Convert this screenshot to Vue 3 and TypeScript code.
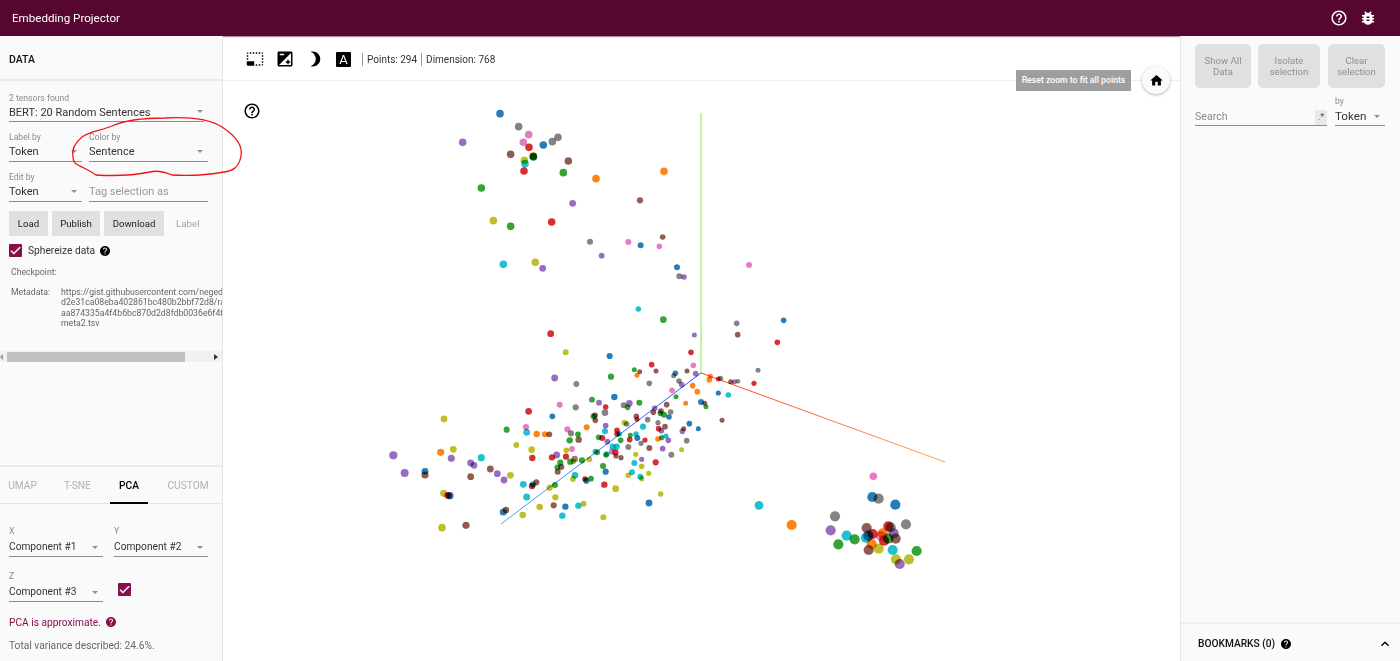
<script setup lang="ts">
// palette index: 0 blue, 1 orange, 2 green, 3 red, 4 purple, 5 brown, 6 pink, 7 gray, 8 olive, 9 cyan
const palette = ["#1f77b4", "#ff7f0e", "#2ca02c", "#d62728", "#9467bd", "#8c564b", "#e377c2", "#7f7f7f", "#bcbd22", "#17becf"];

type Raw = [number, number, number, number?];

// coordinates were read off 3x crops, so each group keeps the crop origin
const groups: { ox: number; oy: number; r: number; pts: Raw[] }[] = [
  {
    ox: 440, oy: 100, r: 3.4,
    pts: [
      [180,41,0],[236,80,7],[266,104,6],[68,127,4],[250,127,6],[267,142,3],[310,135,0],[337,125,7],[354,112,7],[212,163,5],
      [280,168,1],[280,171,9],[280,170,2],[253,181,8],[255,191,9],[252,213,3],[385,183,5],[370,218,2],[468,236,1],[672,214,1],
      [124,264,2],[398,310,4,3],[600,301,5,2.7],[160,362,8],[212,379,2],[335,366,3],[450,425,7,2.6],[565,426,6,2.6],[602,436,0,2.6],
      [668,411,5,2.4],[658,439,6,2.4],[485,467,4,2.5],[190,493,9],[286,487,8],[308,505,4,3],[711,502,0,2.6],[718,529,7,2.6],[732,531,4,2.4],[927,495,6,2.6],
    ],
  },
  {
    ox: 380, oy: 300, r: 3,
    pts: [
      [512,101,3],[557,157,8,2.6],[524,234,4],[589,252,7,2.5],[636,299,2,2.5],[657,308,4,2.5],[539,314,6,2.6],[587,322,7,2.7],[517,349,0,2.5],[446,334,3],
      [645,346,5,2.5],[641,349,2,2.7],[646,361,5,2.4],[192,357,8],[380,389,2,2.7],[438,381,6,2.7],[440,397,9],[470,402,1,2.8],[495,403,1,2.6],[508,403,5,2.5],
      [562,388,6,2.7],[573,400,7,2.7],[594,403,2,2.5],[620,382,1,2.6],[569,421,2,2.8],[596,419,5,2.8],[656,412,2,2.4],[409,435,8,2.5],[455,449,8,2.9],[559,451,8,2.5],
      [576,447,6,2.5],[40,466,4,3.7],[182,457,1,3.2],[220,448,8],[214,475,4,3.2],[304,473,9,3.2],[457,474,3,2.8],[516,472,3,2.8],[530,465,4,3],[558,470,3,2.7],
      [646,455,9,2.4],[652,457,2,2.4],[272,489,4,3],[282,496,4,3],[584,477,7,2.8],[580,484,8,2.5],[571,485,2,2.8],[606,481,2,2.7],[628,478,8,2.5],[541,488,2,2.7],
      [532,502,2,2.5],[544,501,5,2.6],[533,515,5,2.6],[331,507,5,3],[352,521,4,3],[391,526,8,3],[372,540,4,3],[272,530,5,3],[74,519,4,3.6],[135,514,0,3],
      [135,525,5,3.2],[585,526,9,2.9],[579,537,8,2.5],[615,537,3,2.4],[619,542,0,2.7],[633,536,2,2.5],[430,553,9,3],[456,558,3,2.8],[459,553,9,2.8],[469,547,5,2.7],
      [525,555,2,2.6],[509,563,8,2.7],[440,591,9,3.1],[526,592,8,2.7],[191,580,8,3.2],[203,586,3,3],[206,587,6,3],[210,587,0,3.2],[378,630,5,2.8],[370,636,0,3.2],
      [479,621,8,2.9],[521,616,5,2.7],[556,620,0,2.8],[595,617,9,2.8],[611,611,8,2.6],[428,645,8,2.9],[547,647,9,2.8],[186,683,8,3.4],[258,676,5,3.2],
    ],
  },
  {
    ox: 590, oy: 300, r: 2.4,
    pts: [
      [145,27,9],[220,59,2,2.9],[440,70,7],[581,61,0],[443,104,5],[313,105,4,2.1],[562,127,3],[303,157,3],[59,168,0,2.7],[185,194,3],
      [310,196,6],[133,209,2,2.1],[149,215,5,2.1],[198,213,5,2.1],[291,213,5,2.1],[256,220,0],[251,227,7,2.1],[317,221,4],[141,226,1,2.1],[63,230,2,2.7],
      [504,211,7,2.1],[361,229,1,2.1],[358,239,1],[385,237,3,2.1],[392,235,7,2.1],[422,245,5,2.1],[433,245,4,2.1],[444,244,7,1.9],[492,250,3,2.2],[178,250,7],
      [267,243,7],[275,254,4],[308,257,1],[246,271,6],[322,275,1],[385,279,0,2.2],[415,285,9],[258,290,2,2.1],[73,291,0,2.8],[6,300,2,2.7],
      [28,308,4,2.6],[118,310,4,3],[101,316,7,2.6],[113,322,2],[148,308,2,2.6],[287,310,1,2.1],[333,306,0,2.6],[344,310,5,2.1],[348,320,2,2.1],[230,314,5],
      [47,321,3],[194,325,4],[190,337,5],[213,333,5],[211,340,2],[222,344,2,2.6],[242,336,7],[237,351,0],[45,338,7,2.9],[11,348,2,2.7],
      [16,362,5],[139,349,5],[141,358,3,2.1],[173,359,7],[204,368,7,2.2],[103,368,8],[110,372,7],[298,371,0],[396,361,5,2.1],[47,377,4],
      [159,380,9,2.7],[225,380,5],[206,386,3],[281,386,5,2.1],[277,394,4],[273,400,4],[325,386,0,2.1],[214,392,4],[81,391,3],[81,402,3],
      [88,402,9],[45,394,9,2.6],[29,412,2,2.6],[37,414,3,2.6],[121,406,2,2.1],[138,402,9,2.4],[142,414,0,2.6],[135,418,0,2.4],[228,408,9,2.2],[215,413,2,2.2],
      [204,417,1],[235,421,4],[119,419,3],[165,420,3,2.2],[92,421,2],[52,425,4],[290,422,7],[153,430,7,2.2],[115,441,7,2.6],[178,444,5,2.6],
      [218,446,4],[275,449,8,2.1],[68,440,9,2.7],[80,440,9,2.7],[72,445,9,2.7],[16,455,9,2.7],[24,458,2],[65,455,6,2.5],[76,457,3,2.8],[48,465,2],
      [55,468,2],[50,462,9],[78,468,5,2.2],[93,473,5,2.2],[137,463,8,2.2],[244,464,7,2.6],[155,478,4,2.2],[133,489,9,2.6],[197,487,3,2.7],[155,499,8,2.4],
      [39,498,2,2.6],[47,515,0,2.7],[176,520,8,2.2],[126,517,9,2.6],[115,526,8,2.4],[151,530,9,2.6],[155,536,8,2.2],[4,536,2,2.7],[43,554,3,2.8],[77,566,8,3],
      [212,582,8,2.3],[177,609,0,3],[40,652,8,2.6],
    ],
  },
  {
    ox: 740, oy: 450, r: 4.7,
    pts: [
      [400,79,6,3.4],[397,141,0],[416,146,7],[466,164,0],[57,166,9,4],[155,225,1],[285,199,7],[272,241,4],[498,223,7],[320,257,9],
      [344,268,2],[295,283,2],[380,234,5],[378,263,9],[385,257,0],[398,252,3],[445,229,3],[452,232,7],[461,250,4],[428,250,1],
      [445,266,2],[432,272,3],[467,266,5],[423,258,6],[395,282,1],[386,300,5],[416,296,8],[458,300,9],[530,303,2],[468,328,8],
      [507,328,8],[479,342,4],
    ],
  },
];

// the crops overlap a little, drop what was read twice
const points: { x: number; y: number; r: number; fill: string }[] = [];
for (const g of groups) {
  for (const [zx, zy, c, r] of g.pts) {
    const x = g.ox + zx / 3;
    const y = g.oy + zy / 3;
    const fill = palette[c];
    if (points.some((p) => p.fill === fill && Math.hypot(p.x - x, p.y - y) < 3)) continue;
    points.push({ x, y, r: (r ?? g.r) + 0.4, fill });
  }
}

const helpFilled = "M12 2C6.48 2 2 6.48 2 12s4.48 10 10 10 10-4.48 10-10S17.52 2 12 2zm1 17h-2v-2h2v2zm2.07-7.75l-.9.92C13.45 12.9 13 13.5 13 15h-2v-.5c0-1.1.45-2.1 1.17-2.83l1.24-1.26c.37-.36.59-.86.59-1.41 0-1.1-.9-2-2-2s-2 .9-2 2H8c0-2.21 1.79-4 4-4s4 1.79 4 4c0 .88-.36 1.68-.93 2.25z";
const helpOutline = "M11 18h2v-2h-2v2zm1-16C6.48 2 2 6.48 2 12s4.48 10 10 10 10-4.48 10-10S17.52 2 12 2zm0 18c-4.41 0-8-3.59-8-8s3.59-8 8-8 8 3.59 8 8-3.59 8-8 8zm0-14c-2.21 0-4 1.79-4 4h2c0-1.1.9-2 2-2s2 .9 2 2c0 2-3 1.75-3 5h2c0-2.25 3-2.5 3-5 0-2.21-1.79-4-4-4z";
const check = "M9 16.17L4.83 12l-1.42 1.41L9 19 21 7l-1.41-1.41z";
</script>

<template>
  <div class="app">
    <header class="topbar">
      <span class="title">Embedding Projector</span>
      <div class="top-icons">
        <svg viewBox="0 0 24 24" class="ic18"><path :d="helpOutline" /></svg>
        <svg viewBox="0 0 24 24" class="ic18"><path d="M20 8h-2.81c-.45-.78-1.07-1.45-1.82-1.96L17 4.41 15.59 3l-2.17 2.17C12.96 5.06 12.49 5 12 5c-.49 0-.96.06-1.41.17L8.41 3 7 4.41l1.62 1.63C7.88 6.55 7.26 7.22 6.81 8H4v2h2.09c-.05.33-.09.66-.09 1v1H4v2h2v1c0 .34.04.67.09 1H4v2h2.81c1.04 1.79 2.97 3 5.19 3s4.15-1.21 5.19-3H20v-2h-2.09c.05-.33.09-.66.09-1v-1h2v-2h-2v-1c0-.34-.04-.67-.09-1H20V8zm-6 8h-4v-2h4v2zm0-4h-4v-2h4v2z" /></svg>
      </div>
    </header>

    <div class="body">
      <aside class="left">
        <div class="data-head">DATA</div>

        <div class="data-form">
          <div class="field full">
            <label>2 tensors found</label>
            <div class="value">BERT: 20 Random Sentences<i class="caret"></i></div>
          </div>
          <div class="row">
            <div class="field w73">
              <label>Label by</label>
              <div class="value">Token<i class="caret"></i></div>
            </div>
            <div class="field w119">
              <label>Color by</label>
              <div class="value">Sentence<i class="caret"></i></div>
            </div>
          </div>
          <div class="row">
            <div class="field w73">
              <label>Edit by</label>
              <div class="value">Token<i class="caret"></i></div>
            </div>
            <div class="field w119">
              <label>&nbsp;</label>
              <div class="value placeholder">Tag selection as</div>
            </div>
          </div>
          <div class="btn-row">
            <button class="btn" type="button">Load</button>
            <button class="btn" type="button">Publish</button>
            <button class="btn" type="button">Download</button>
            <span class="btn-off">Label</span>
          </div>
          <div class="sphere">
            <span class="checkbox"><svg viewBox="0 0 24 24"><path :d="check" /></svg></span>
            <span class="sphere-label">Sphereize data</span>
            <svg viewBox="0 0 24 24" class="ic12"><path :d="helpFilled" /></svg>
          </div>
        </div>

        <div class="meta">
          <div class="meta-row"><span class="meta-key">Checkpoint:</span></div>
          <div class="meta-row">
            <span class="meta-key">Metadata:</span>
            <div class="meta-val">
              <div>https://gist.githubusercontent.com/negedng/</div>
              <div>d2e31ca08eba402861bc480b2bbf72d8/raw/</div>
              <div>aa874335a4f4b6bc870d2d8fdb0036e6f4f0/</div>
              <div>meta2.tsv</div>
            </div>
          </div>
        </div>

        <div class="scrollbar">
          <i class="arrow-l"></i>
          <i class="thumb"></i>
          <i class="arrow-r"></i>
        </div>

        <div class="spacer"></div>

        <nav class="tabs">
          <span class="tab">UMAP</span>
          <span class="tab">T-SNE</span>
          <span class="tab active">PCA</span>
          <span class="tab">CUSTOM</span>
        </nav>

        <div class="pca">
          <div class="row">
            <div class="field w94">
              <label>X</label>
              <div class="value">Component #1<i class="caret"></i></div>
            </div>
            <div class="field w94">
              <label>Y</label>
              <div class="value">Component #2<i class="caret"></i></div>
            </div>
          </div>
          <div class="row z-row">
            <div class="field w94">
              <label>Z</label>
              <div class="value">Component #3<i class="caret"></i></div>
            </div>
            <span class="checkbox z-check"><svg viewBox="0 0 24 24"><path :d="check" /></svg></span>
          </div>
          <div class="approx">
            PCA is approximate.
            <svg viewBox="0 0 24 24" class="ic12 pink"><path :d="helpFilled" /></svg>
          </div>
          <div class="variance">Total variance described: 24.6%.</div>
        </div>
      </aside>

      <main class="main">
        <div class="toolbar">
          <svg viewBox="0 0 24 24" class="ic18"><path d="M23 15h-2v2h2v-2zm0-4h-2v2h2v-2zm0 8h-2v2c1 0 2-1 2-2zM15 3h-2v2h2V3zm8 4h-2v2h2V7zm-2-4v2h2c0-1-1-2-2-2zM3 21h8v-6H1v4c0 1.1.9 2 2 2zM3 7H1v2h2V7zm12 12h-2v2h2v-2zm4-16h-2v2h2V3zm0 16h-2v2h2v-2zM3 3C2 3 1 4 1 5h2V3zm0 8H1v2h2v-2zm8-8H9v2h2V3zM7 3H5v2h2V3z" /></svg>
          <svg viewBox="0 0 24 24" class="ic18"><path d="M15 17v2h2v-2h2v-2h-2v-2h-2v2h-2v2h2zm5-15H4c-1.1 0-2 .9-2 2v16c0 1.1.9 2 2 2h16c1.1 0 2-.9 2-2V4c0-1.1-.9-2-2-2zM5 5h6v2H5V5zm15 15H4L20 4v16z" /></svg>
          <svg viewBox="0 0 24 24" class="ic18"><path d="M9 2c-1.05 0-2.05.16-3 .46 4.06 1.27 7 5.06 7 9.54 0 4.48-2.94 8.27-7 9.54.95.3 1.95.46 3 .46 5.52 0 10-4.48 10-10S14.52 2 9 2z" /></svg>
          <span class="label-ic">A</span>
          <div class="stats">
            <span class="stat">Points: 294</span>
            <span class="stat">Dimension: 768</span>
          </div>
        </div>

        <svg class="plot" viewBox="0 0 1400 661" width="1400" height="661">
          <defs>
            <linearGradient id="xAxis" gradientUnits="userSpaceOnUse" x1="701" y1="373" x2="945" y2="462">
              <stop offset="0" stop-color="#ff3b1f" />
              <stop offset="1" stop-color="#ffa64d" />
            </linearGradient>
            <linearGradient id="zAxis" gradientUnits="userSpaceOnUse" x1="701" y1="373" x2="501" y2="524">
              <stop offset="0" stop-color="#2b4dff" />
              <stop offset="1" stop-color="#4aa8ff" />
            </linearGradient>
          </defs>
          <line x1="701" y1="113" x2="701" y2="373" stroke="#a6f56e" stroke-width="1.4" />
          <line x1="701" y1="373" x2="945" y2="462" stroke="url(#xAxis)" />
          <line x1="701" y1="373" x2="501" y2="524" stroke="url(#zAxis)" />
          <circle v-for="(p, i) in points" :key="i" class="pt" :cx="p.x" :cy="p.y" :r="p.r" :fill="p.fill" />
        </svg>

        <svg viewBox="0 0 24 24" class="ic18 canvas-help"><path :d="helpOutline" /></svg>
        <span class="tooltip">Reset zoom to fit all points</span>
        <button class="home" type="button">
          <svg viewBox="0 0 24 24"><path d="M10 20v-6h4v6h5v-8h3L12 3 2 12h3v8z" /></svg>
        </button>
      </main>

      <aside class="right">
        <div class="inspector">
          <div class="sel-btns">
            <button class="sel-btn b1" type="button">Show All Data</button>
            <button class="sel-btn b2" type="button">Isolate selection</button>
            <button class="sel-btn b3" type="button">Clear selection</button>
          </div>
          <div class="search-row">
            <div class="search">
              <span>Search</span>
              <i class="regex">.*</i>
            </div>
            <div class="field by">
              <label>by</label>
              <div class="value">Token<i class="caret"></i></div>
            </div>
          </div>
        </div>
        <div class="bookmarks">
          <span class="bm-title">BOOKMARKS (0)</span>
          <svg viewBox="0 0 24 24" class="ic12"><path :d="helpFilled" /></svg>
          <svg viewBox="0 0 24 24" class="chev"><path d="M7.41 15.41L12 10.83l4.59 4.58L18 14l-6-6-6 6z" /></svg>
        </div>
      </aside>
    </div>

    <!-- hand drawn annotation on top of the screenshot -->
    <svg class="scribble" viewBox="0 0 260 200" width="260" height="200">
      <path d="M73 157C71 148 76 142 82 137C90 131 100 131 112 126C125 120 145 118 165 118C185 117 208 118 222 127C236 136 243 145 241 156C239 168 232 171 224 172C208 175 190 176 172 175C165 172 158 170 150 172C135 175 112 176 96 175C90 170 80 167 75 163C73 161 73 159 73 157Z" fill="none" stroke="#f01414" stroke-width="1.3" />
    </svg>
  </div>
</template>

<style>
html, body { margin: 0; background: #fff; }
</style>

<style scoped>
.app {
  position: relative;
  width: 1400px;
  height: 661px;
  overflow: hidden;
  font-family: Roboto, "Liberation Sans", sans-serif;
  color: #333;
  font-size: 12px;
}
.topbar {
  height: 36px;
  background: #560731;
  color: #fff;
  display: flex;
  align-items: center;
  justify-content: space-between;
  padding: 0 23px 0 12px;
  box-shadow: 0 1px 1px rgba(86, 7, 49, 0.45);
}
.title { font-size: 11.6px; }
.top-icons { display: flex; gap: 11px; }
.top-icons svg { fill: #fff; }
.ic18 { width: 18px; height: 18px; display: block; fill: #000; flex: none; }
.ic12 { width: 12px; height: 12px; display: block; fill: #000; flex: none; }
.ic12.pink { fill: #880e4f; }

.body { display: flex; height: 625px; }

.left {
  width: 222px;
  flex: none;
  background: #fafafa;
  border-right: 1px solid #e6e6e6;
  display: flex;
  flex-direction: column;
  overflow: hidden;
}
.data-head {
  height: 40px;
  padding: 3px 0 0 9px;
  display: flex;
  align-items: center;
  font-size: 10.5px;
  font-weight: 500;
  color: #111;
  border-bottom: 2px solid #eaeaea;
  flex: none;
}
.data-form { padding: 12px 0 0 9px; flex: none; }
.row { display: flex; gap: 7px; margin-top: 10px; }
.field { position: relative; }
.field label { display: block; font-size: 8.6px; line-height: 10px; color: #8a8a8a; }
.field .value {
  position: relative;
  height: 19px;
  line-height: 20px;
  font-size: 11px;
  color: #333;
  border-bottom: 1px solid #8e8e8e;
}
.field.full .value { height: 18px; }
.value.placeholder { color: #9a9a9a; }
.caret {
  position: absolute;
  right: 5px;
  top: 8px;
  width: 0;
  height: 0;
  border-left: 3.5px solid transparent;
  border-right: 3.5px solid transparent;
  border-top: 3.5px solid #8f8f8f;
}
.full { width: 195px; }
.full .caret { right: 1px; top: 7px; }
.w73 { width: 73px; }
.w119 { width: 119px; }
.w94 { width: 94px; }
.btn-row { display: flex; gap: 4px; margin-top: 9px; align-items: center; }
.btn {
  height: 25px;
  padding: 0;
  border: 0;
  background: #e0e0e0;
  font: 9.6px Roboto, sans-serif;
  color: #222;
}
.btn:nth-child(1) { width: 39px; }
.btn:nth-child(2) { width: 48px; }
.btn:nth-child(3) { width: 60px; }
.btn-off { font-size: 9.8px; color: #a3a3a3; margin-left: 8px; }
.sphere { display: flex; align-items: center; margin-top: 8px; }
.checkbox {
  width: 13px;
  height: 13px;
  background: #880e4f;
  border-radius: 1px;
  display: block;
  flex: none;
}
.checkbox svg { width: 13px; height: 13px; fill: #fff; stroke: #fff; stroke-width: 1; display: block; }
.sphere-label { font-size: 10.2px; margin: 0 4px 0 6px; color: #333; }
.meta { padding: 10px 0 0 11px; font-size: 8.7px; color: #666; flex: none; }
.meta-row { display: flex; margin-bottom: 10px; line-height: 10.2px; }
.meta-key { width: 50px; flex: none; }
.meta-val { white-space: nowrap; }
.scrollbar {
  position: relative;
  height: 11px;
  background: #f1f1f1;
  margin-top: 13px;
  flex: none;
}
.thumb { position: absolute; left: 7px; top: 1px; width: 178px; height: 10px; background: #c1c1c1; }
.arrow-l, .arrow-r { position: absolute; top: 3px; width: 0; height: 0; border-top: 3px solid transparent; border-bottom: 3px solid transparent; }
.arrow-l { left: 0; border-right: 3px solid #999; }
.arrow-r { right: 4px; border-left: 4px solid #333; }
.spacer { flex: 1; border-bottom: 2px solid #eaeaea; }
.tabs {
  height: 34px;
  border-bottom: 1px solid #e4e4e4;
  flex: none;
  font-size: 10.2px;
  color: #b1b1b1;
  display: grid;
  grid-template-columns: 45px 65px 38px 80px;
  margin-top: 2px;
}
.tab { text-align: center; line-height: 33px; }
.tab.active { color: #000; font-weight: 500; border-bottom: 2px solid #000; height: 33px; }
.pca { padding: 0 0 0 9px; flex: none; height: 157px; }
.pca .row { gap: 11px; margin-top: 22px; }
.pca .row.z-row { margin-top: 14px; }
.pca .field label { margin-bottom: 3px; }
.pca .value { font-size: 10.2px; height: 17px; line-height: 16px; }
.pca .caret { top: 7px; }
.z-check { margin: 12px 0 0 4px; }
.approx { display: flex; align-items: center; gap: 4px; color: #880e4f; font-size: 10.2px; margin-top: 14px; }
.variance { color: #666; font-size: 10.2px; margin-top: 12px; }

.main { position: relative; flex: 1; min-width: 0; }
.toolbar {
  position: relative;
  height: 42px;
  border-bottom: 1px solid #eeeeee;
  display: flex;
  align-items: center;
  gap: 12px;
  padding: 2px 0 0 23px;
}
.label-ic {
  width: 15px;
  height: 15px;
  background: #000;
  color: #fff;
  border-radius: 1px;
  font-size: 13px;
  line-height: 15px;
  text-align: center;
}
.stats { display: flex; margin-left: -1px; color: #333; font-size: 10px; }
.stat { border-left: 1px solid #999; padding: 0 4px; line-height: 13px; }
.plot { position: absolute; left: -223px; top: -36px; pointer-events: none; }
.pt { mix-blend-mode: multiply; opacity: 0.96; }
.canvas-help { position: absolute; left: 20px; top: 66px; }
.tooltip {
  position: absolute;
  z-index: 2;
  left: 793px;
  top: 34px;
  width: 115px;
  height: 21px;
  line-height: 21px;
  text-align: center;
  background: #9e9e9e;
  color: #fff;
  font-size: 8.7px;
  font-weight: 500;
  white-space: nowrap;
}
.home {
  position: absolute;
  z-index: 2;
  left: 919px;
  top: 30px;
  width: 28px;
  height: 28px;
  padding: 0;
  border: 0;
  border-radius: 50%;
  background: #fafafa;
  box-shadow: 0 1px 3px rgba(0, 0, 0, 0.3);
  display: flex;
  align-items: center;
  justify-content: center;
}
.home svg { width: 15px; height: 15px; fill: #000; }

.right {
  width: 220px;
  flex: none;
  box-sizing: border-box;
  background: #fafafa;
  border-left: 1px solid #e6e6e6;
  display: flex;
  flex-direction: column;
}
.inspector { flex: 1; padding: 8px 14px 0 14px; }
.sel-btns { display: flex; height: 44px; }
.sel-btn {
  border: 0;
  padding: 0 3px;
  border-radius: 5px;
  background: #e0e0e0;
  color: #8f8f8f;
  font: 9.6px/11.4px Roboto, sans-serif;
}
.b1 { width: 56px; }
.b2 { width: 62px; margin-left: 7px; }
.b3 { width: 57px; margin-left: 8px; }
.search-row { display: flex; gap: 8px; margin-top: 7px; }
.search {
  position: relative;
  width: 132px;
  height: 31px;
  border-bottom: 1px solid #8e8e8e;
  display: flex;
  align-items: flex-end;
  padding-bottom: 2px;
  box-sizing: border-box;
  color: #8a8a8a;
  font-size: 10.6px;
  line-height: 13px;
}
.regex {
  position: absolute;
  right: 0;
  bottom: 0;
  width: 12px;
  height: 15px;
  background: #e8e8e8;
  font: 9px/15px Roboto, sans-serif;
  color: #555;
  text-align: center;
}
.by { width: 50px; }
.by label { line-height: 12px; }
.by .value { height: 18px; font-size: 11.6px; line-height: 18px; }
.bookmarks {
  height: 39px;
  box-sizing: border-box;
  border-top: 2px solid #eeeeee;
  display: flex;
  align-items: center;
  padding: 2px 7px 0 17px;
  flex: none;
}
.bm-title { font-size: 10.2px; font-weight: 500; color: #111; margin-right: 5px; }
.chev { width: 16px; height: 16px; margin-left: auto; }
.scribble { position: absolute; left: 0; top: 0; pointer-events: none; }
</style>
